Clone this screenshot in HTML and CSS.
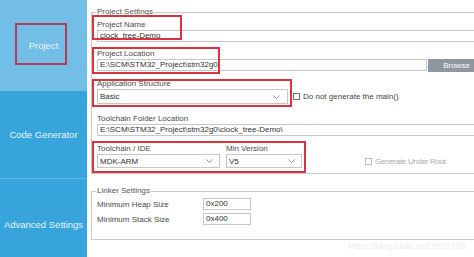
FILE: index.html
```html
<!DOCTYPE html>
<html lang="en">
<head>
    <meta charset="UTF-8">
    <meta name="viewport" content="width=device-width, initial-scale=1.0">
    <title>Project Manager</title>
    <link rel="stylesheet" href="styles.css">
</head>
<body>
    <div class="app">
        <nav class="sidebar">
            <div class="nav-item active">Project</div>
            <div class="nav-item">Code Generator</div>
            <div class="nav-item last">Advanced Settings</div>
        </nav>

        <main class="content">
            <fieldset class="group settings">
                <legend>Project Settings</legend>

                <label>Project Name</label>
                <div class="input">clock_tree-Demo</div>

                <label class="gap-6">Project Location</label>
                <div class="row">
                    <div class="input grow">E:\SCM\STM32_Project\stm32g0\</div>
                    <div class="browse">Browse</div>
                </div>

                <div class="row bottom gap-6">
                    <div class="col col-structure">
                        <label>Application Structure</label>
                        <div class="select">Basic
                            <svg width="7" height="4" viewBox="0 0 7 4"><polyline points="0.5,0.5 3.5,3.5 6.5,0.5" fill="none" stroke="#8a8a8a" stroke-width="0.9"/></svg>
                        </div>
                    </div>
                    <div class="check">
                        <span class="box"></span>Do not generate the main()
                    </div>
                </div>

                <label class="gap-9">Toolchain Folder Location</label>
                <div class="input">E:\SCM\STM32_Project\stm32g0\clock_tree-Demo\</div>

                <div class="row bottom gap-7">
                    <div class="col col-ide">
                        <label>Toolchain / IDE</label>
                        <div class="select small">MDK-ARM
                            <svg width="7" height="4" viewBox="0 0 7 4"><polyline points="0.5,0.5 3.5,3.5 6.5,0.5" fill="none" stroke="#8a8a8a" stroke-width="0.9"/></svg>
                        </div>
                    </div>
                    <div class="col col-version">
                        <label>Min Version</label>
                        <div class="select small">V5
                            <svg width="7" height="4" viewBox="0 0 7 4"><polyline points="0.5,0.5 3.5,3.5 6.5,0.5" fill="none" stroke="#8a8a8a" stroke-width="0.9"/></svg>
                        </div>
                    </div>
                    <div class="check disabled small">
                        <span class="box"></span>Generate Under Root
                    </div>
                </div>
            </fieldset>

            <fieldset class="group linker">
                <legend>Linker Settings</legend>
                <div class="linker-row">
                    <span class="linker-label">Minimum Heap Size</span>
                    <div class="input short">0x200</div>
                </div>
                <div class="linker-row">
                    <span class="linker-label">Minimum Stack Size</span>
                    <div class="input short">0x400</div>
                </div>
            </fieldset>
        </main>

        <!-- red annotation boxes drawn over the form -->
        <div class="mark mark-nav"></div>
        <div class="mark mark-name"></div>
        <div class="mark mark-location"></div>
        <div class="mark mark-structure"></div>
        <div class="mark mark-toolchain"></div>

        <div class="watermark">https://blog.csdn.net/zhh2763</div>
    </div>
</body>
</html>
```

FILE: styles.css
```css
* {
    box-sizing: border-box;
}

body {
    margin: 0;
    font-family: "Liberation Sans", Arial, sans-serif;
    font-size: 8px;
    color: #4a4a4a;
    background-color: #fff;
}

.app {
    position: relative;
    display: flex;
    width: 474px;
    height: 257px;
    overflow: hidden;
}

/* left navigation */
.sidebar {
    width: 87px;
    flex-shrink: 0;
    background-color: #37a4db;
    color: #e6f4fc;
    font-size: 9.5px;
}

.nav-item {
    height: 88px;
    display: flex;
    align-items: center;
    justify-content: center;
    border-bottom: 1px solid #63b9e5;
}

.nav-item.active {
    height: 91px;
    background-color: #72bee7;
    border-bottom: none;
}

.nav-item.last {
    height: 91px;
    border-bottom: none;
}

/* form area */
.content {
    flex: 1;
    padding-left: 4px;
}

.group {
    margin: 0 -11px 0 0;
    padding: 2px 0 5px 5px;
    border: 1px solid #c9c9c9;
    border-right: none;
    min-width: 0;
}

.group legend {
    padding: 0 1px;
    margin-left: -1px;
    line-height: 10px;
    color: #555;
}

.settings {
    margin-top: 7px;
}

.linker {
    margin-top: 12px;
    padding-bottom: 14px;
}

label {
    display: block;
    line-height: 11px;
}

.gap-6 {
    margin-top: 6px;
}

.gap-7 {
    margin-top: 7px;
}

.gap-9 {
    margin-top: 9px;
}

.input {
    height: 12px;
    padding: 0 2px;
    border: 1px solid #c6c6c6;
    line-height: 10px;
    color: #333;
    white-space: nowrap;
    overflow: hidden;
}

.row {
    display: flex;
    align-items: flex-start;
}

.row.bottom {
    align-items: flex-end;
}

.grow {
    flex: 1;
}

.browse {
    width: 57px;
    height: 13px;
    margin-left: 1px;
    background-color: #8e979f;
    color: #fff;
    text-align: center;
    line-height: 13px;
}

.col-structure {
    width: 191px;
}

.col-ide {
    width: 123px;
}

.col-version {
    width: 76px;
    margin-left: 6px;
}

.select {
    height: 15px;
    padding: 0 7px 0 2px;
    border: 1px solid #c6c6c6;
    display: flex;
    align-items: center;
    justify-content: space-between;
    color: #333;
}

.select.small {
    height: 14px;
    padding-right: 6px;
}

.check {
    height: 15px;
    margin-left: 5px;
    display: flex;
    align-items: center;
    color: #444;
}

.check.small {
    height: 14px;
    margin-left: 63px;
    letter-spacing: -0.3px;
}

.check .box {
    width: 7px;
    height: 7px;
    margin-right: 3px;
    border: 1px solid #707070;
    background-color: #fff;
}

.check.disabled {
    color: #ababab;
}

.check.disabled .box {
    border-color: #c0c0c0;
}

.linker-row {
    display: flex;
    align-items: center;
}

.linker-row + .linker-row {
    margin-top: 3px;
}

.linker-label {
    width: 106px;
}

.input.short {
    width: 48px;
}

/* annotations */
.mark {
    position: absolute;
    border: 2px solid #d9333f;
}

.mark-nav {
    left: 15px;
    top: 23px;
    width: 52px;
    height: 42px;
    border-color: #b43a57;
}

.mark-name {
    left: 92px;
    top: 15px;
    width: 90px;
    height: 25px;
}

.mark-location {
    left: 92px;
    top: 47px;
    width: 128px;
    height: 27px;
}

.mark-structure {
    left: 92px;
    top: 79px;
    width: 200px;
    height: 28px;
}

.mark-toolchain {
    left: 92px;
    top: 141px;
    width: 214px;
    height: 32px;
}

.watermark {
    position: absolute;
    left: 348px;
    top: 241px;
    font-size: 9px;
    color: #ececec;
    white-space: nowrap;
}
```
